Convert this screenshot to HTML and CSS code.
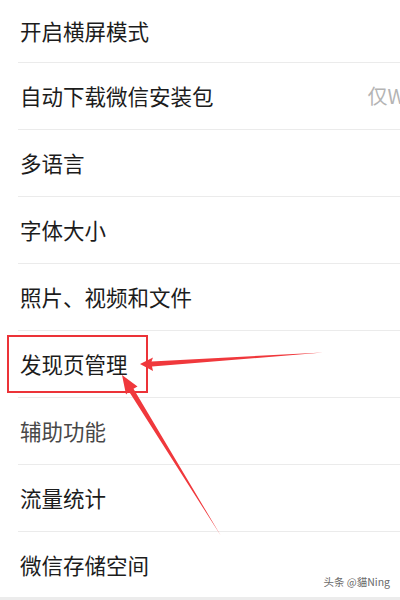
FILE: index.html
```html
<!DOCTYPE html>
<html lang="zh-CN">
<head>
  <meta charset="UTF-8">
  <title>通用</title>
  <link rel="stylesheet" href="styles.css">
</head>
<body>
  <div class="page">
    <ul class="settings">
      <li class="row first"><span class="label">开启横屏模式</span></li>
      <li class="row"><span class="label">自动下载微信安装包</span><span class="value">仅Wi-Fi</span></li>
      <li class="row"><span class="label">多语言</span><span class="value far">跟随系统</span></li>
      <li class="row"><span class="label">字体大小</span></li>
      <li class="row"><span class="label">照片、视频和文件</span></li>
      <li class="row"><span class="label">发现页管理</span></li>
      <li class="row"><span class="label muted">辅助功能</span></li>
      <li class="row"><span class="label">流量统计</span></li>
      <li class="row last"><span class="label">微信存储空间</span></li>
    </ul>
    <div class="watermark">头条 @貓Ning</div>

    <!-- annotation: box + two arrows -->
    <svg class="marks" width="400" height="600" viewBox="0 0 400 600">
      <rect x="8" y="336" width="139" height="56" fill="none" stroke="#ec3338" stroke-width="2"/>
      <polygon fill="#f0383c" points="140,364 153,357.5 151.5,361.5 323,352.5 152,366.5 153,371"/>
      <polygon fill="#f0383c" points="122,375 137.5,386.5 133.5,388.8 221,536 129,391.5 126,394.5"/>
    </svg>
  </div>
</body>
</html>
```

FILE: styles.css
```css
* {
  box-sizing: border-box;
}

body {
  margin: 0;
  background-color: #ffffff;
  font-family: "Noto Sans CJK SC", "Noto Sans", sans-serif;
}

.page {
  position: relative;
  width: 400px;
  height: 600px;
  overflow: hidden;
  background-color: #ffffff;
  border-bottom: 3px solid #ececec;
}

.settings {
  list-style: none;
  margin: 0;
  padding: 0 0 0 18px;
}

.row {
  display: flex;
  align-items: center;
  height: 67px;
  padding-left: 2px;
  padding-bottom: 2px;
  border-bottom: 1px solid #ebebeb;
  white-space: nowrap;
  overflow: hidden;
}

.row.first {
  height: 63px;
}

.row.last {
  border-bottom: none;
}

.label {
  flex: 1;
  font-size: 21.5px;
  color: #1c1c1c;
}

.label.muted {
  color: #484848;
}

.value {
  font-size: 20px;
  color: #b4b4b4;
  margin-right: -34px;
}

.value.far {
  margin-right: -80px;
}

.watermark {
  position: absolute;
  right: 10px;
  bottom: 8px;
  font-size: 10.5px;
  color: #6a6a6a;
}

.marks {
  position: absolute;
  left: 0;
  top: 0;
}
```
